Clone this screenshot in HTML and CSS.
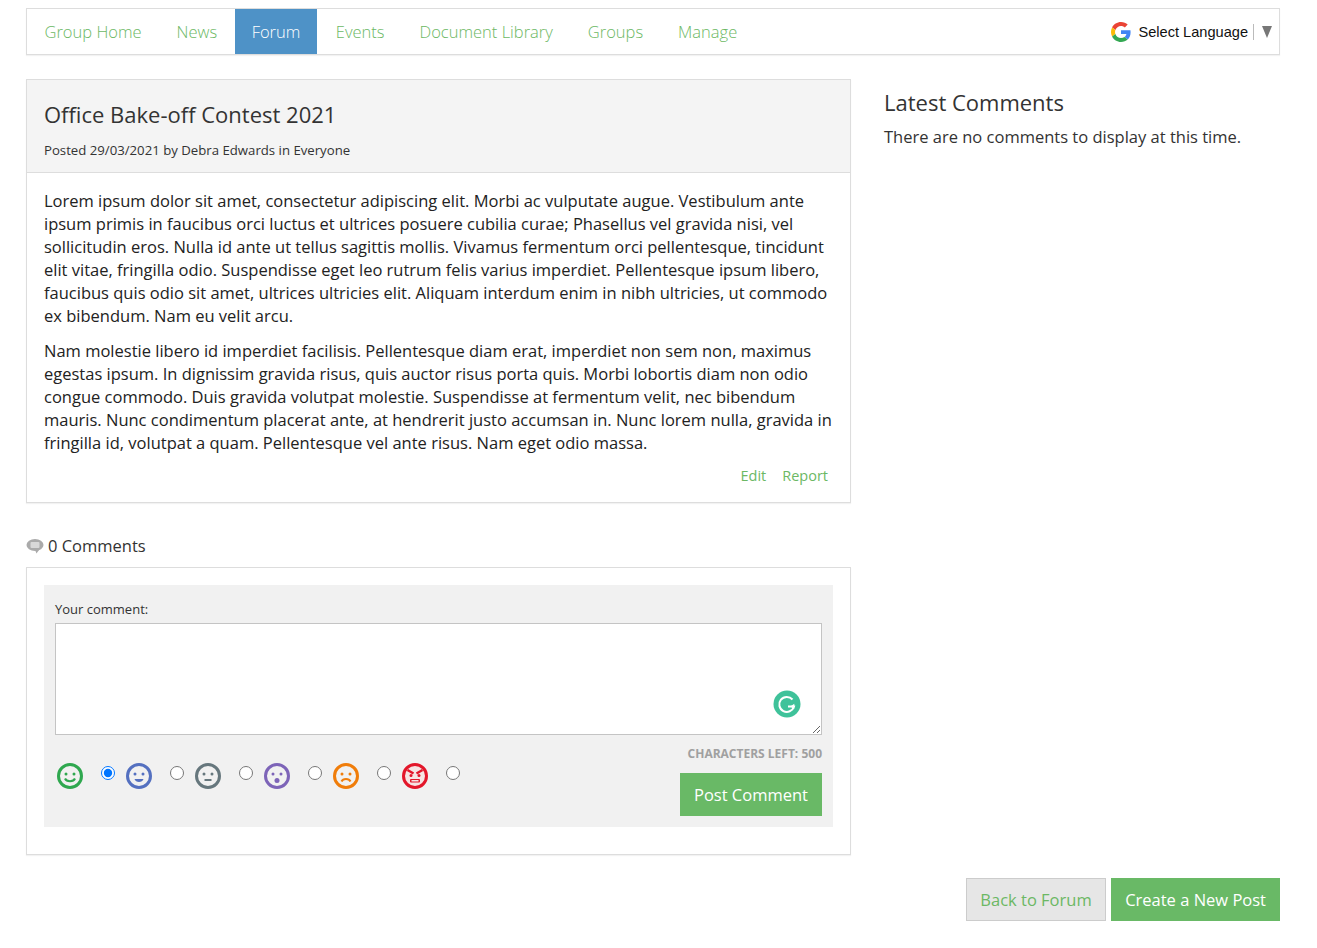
FILE: index.html
```html
<!DOCTYPE html>
<html lang="en">
<head>
  <meta charset="UTF-8">
  <title>Office Bake-off Contest 2021</title>
  <link rel="stylesheet" href="styles.css">
</head>
<body>

<div class="page">
  <nav class="topnav">
    <a href="#">Group Home</a>
    <a href="#">News</a>
    <a href="#" class="active">Forum</a>
    <a href="#">Events</a>
    <a href="#">Document Library</a>
    <a href="#">Groups</a>
    <a href="#">Manage</a>
    <div class="translate">
      <svg class="g-logo" width="20" height="20" viewBox="0 0 48 48">
        <path fill="#EA4335" d="M24 9.500c3.500 0 6.700 1.200 9.200 3.600l6.900-6.900C35.900 2.400 30.500 0 24 0 14.600 0 6.500 5.400 2.600 13.200l8 6.200C12.500 13.700 17.800 9.500 24 9.500z"/>
        <path fill="#4285F4" d="M47 24.500c0-1.600-.2-3.100-.4-4.500H24v9h12.900c-.6 3-2.200 5.500-4.700 7.200l7.700 6C44.400 38.100 47 31.900 47 24.500z"/>
        <path fill="#FBBC05" d="M10.500 28.600c-.5-1.400-.8-3-.8-4.600s.3-3.200.8-4.600l-8-6.200C.9 16.500 0 20.100 0 24s.9 7.500 2.600 10.800l7.900-6.200z"/>
        <path fill="#34A853" d="M24 48c6.500 0 11.900-2.100 15.900-5.800l-7.700-6c-2.100 1.400-4.900 2.300-8.200 2.300-6.200 0-11.500-4.200-13.400-9.900l-8 6.200C6.500 42.600 14.600 48 24 48z"/>
      </svg>
      <span class="lang-text">Select Language</span>
      <span class="lang-arrow"></span>
    </div>
  </nav>

  <div class="columns">
    <main class="main-col">
      <article class="post">
        <header class="post-head">
          <h1>Office Bake-off Contest 2021</h1>
          <p class="meta">Posted 29/03/2021 by Debra Edwards in Everyone</p>
        </header>
        <div class="post-body">
          <p>Lorem ipsum dolor sit amet, consectetur adipiscing elit. Morbi ac vulputate augue. Vestibulum ante ipsum primis in faucibus orci luctus et ultrices posuere cubilia curae; Phasellus vel gravida nisi, vel sollicitudin eros. Nulla id ante ut tellus sagittis mollis. Vivamus fermentum orci pellentesque, tincidunt elit vitae, fringilla odio. Suspendisse eget leo rutrum felis varius imperdiet. Pellentesque ipsum libero, faucibus quis odio sit amet, ultrices ultricies elit. Aliquam interdum enim in nibh ultricies, ut commodo ex bibendum. Nam eu velit arcu.</p>
          <p>Nam molestie libero id imperdiet facilisis. Pellentesque diam erat, imperdiet non sem non, maximus egestas ipsum. In dignissim gravida risus, quis auctor risus porta quis. Morbi lobortis diam non odio congue commodo. Duis gravida volutpat molestie. Suspendisse at fermentum velit, nec bibendum mauris. Nunc condimentum placerat ante, at hendrerit justo accumsan in. Nunc lorem nulla, gravida in fringilla id, volutpat a quam. Pellentesque vel ante risus. Nam eget odio massa.</p>
          <div class="post-links">
            <a href="#">Edit</a>
            <a href="#">Report</a>
          </div>
        </div>
      </article>

      <div class="comment-count">
        <svg width="18" height="16" viewBox="0 0 18 16">
          <ellipse cx="9" cy="7" rx="8.500" ry="6" fill="#aaa"/>
          <path d="M9 12l4 0-2.500 3.500z" fill="#aaa"/>
          <rect x="4.500" y="4" width="9" height="6" rx="1" fill="#d8d8d8"/>
        </svg>
        <span>0 Comments</span>
      </div>

      <section class="comment-card">
        <form class="comment-form">
          <label for="comment">Your comment:</label>
          <div class="textarea-wrap">
            <textarea id="comment"></textarea>
            <svg class="grammarly" width="28" height="28" viewBox="0 0 28 28">
              <circle cx="14" cy="14" r="13.500" fill="#3fc29a"/>
              <path d="M19.500 9.500a7.500 7.500 0 1 0 1.500 7h-6" fill="none" stroke="#fff" stroke-width="2"/>
              <path d="M21.300 13.800v5.200l-4-2.500z" fill="#fff"/>
            </svg>
          </div>
          <div class="form-foot">
            <div class="moods">
              <label class="mood">
                <svg width="26" height="26" viewBox="0 0 26 26" class="m-green">
                  <circle class="ring" cx="13" cy="13" r="11.500"/>
                  <circle class="eye" cx="9" cy="11" r="1.500"/><circle class="eye" cx="17" cy="11" r="1.500"/>
                  <path class="line" d="M8 15.500c1.500 3.500 8.500 3.500 10 0"/>
                </svg>
                <input type="radio" name="mood" checked>
              </label>
              <label class="mood">
                <svg width="26" height="26" viewBox="0 0 26 26" class="m-blue">
                  <circle class="ring" cx="13" cy="13" r="11.500"/>
                  <circle class="eye" cx="9" cy="11" r="1.500"/><circle class="eye" cx="17" cy="11" r="1.500"/>
                  <path class="eye" d="M8.500 16h9c-1 4-8 4-9 0z"/>
                </svg>
                <input type="radio" name="mood">
              </label>
              <label class="mood">
                <svg width="26" height="26" viewBox="0 0 26 26" class="m-grey">
                  <circle class="ring" cx="13" cy="13" r="11.500"/>
                  <circle class="eye" cx="9" cy="11" r="1.500"/><circle class="eye" cx="17" cy="11" r="1.500"/>
                  <path class="line" d="M9.500 17h7"/>
                </svg>
                <input type="radio" name="mood">
              </label>
              <label class="mood">
                <svg width="26" height="26" viewBox="0 0 26 26" class="m-purple">
                  <circle class="ring" cx="13" cy="13" r="11.500"/>
                  <circle class="eye" cx="9" cy="11" r="1.500"/><circle class="eye" cx="17" cy="11" r="1.500"/>
                  <ellipse class="eye" cx="13" cy="17.500" rx="2.500" ry="2.500"/>
                </svg>
                <input type="radio" name="mood">
              </label>
              <label class="mood">
                <svg width="26" height="26" viewBox="0 0 26 26" class="m-orange">
                  <circle class="ring" cx="13" cy="13" r="11.500"/>
                  <circle class="eye" cx="9" cy="11" r="1.500"/><circle class="eye" cx="17" cy="11" r="1.500"/>
                  <path class="line" d="M8.500 18.500c1.500-3.500 7.500-3.500 9 0"/>
                </svg>
                <input type="radio" name="mood">
              </label>
              <label class="mood">
                <svg width="26" height="26" viewBox="0 0 26 26" class="m-red">
                  <circle class="ring" cx="13" cy="13" r="11.500"/>
                  <path class="brow" d="M5.500 7l6 3.500M20.500 7l-6 3.500"/>
                  <circle class="eye" cx="9" cy="12.500" r="1.500"/><circle class="eye" cx="17" cy="12.500" r="1.500"/>
                  <rect class="eye" x="8" y="16" width="10" height="3.500" rx="1"/>
                  <rect class="teeth" x="9.500" y="17" width="7" height="1.500"/>
                </svg>
                <input type="radio" name="mood">
              </label>
            </div>
            <div class="submit-col">
              <div class="chars-left">CHARACTERS LEFT: 500</div>
              <button type="button" class="btn btn-green">Post Comment</button>
            </div>
          </div>
        </form>
      </section>
    </main>

    <aside class="side-col">
      <h2>Latest Comments</h2>
      <p>There are no comments to display at this time.</p>
    </aside>
  </div>

  <div class="page-actions">
    <a href="#" class="btn btn-grey">Back to Forum</a>
    <a href="#" class="btn btn-green">Create a New Post</a>
  </div>
</div>

</body>
</html>
```

FILE: styles.css
```css
* { box-sizing: border-box; }
body {
  margin: 0;
  background: #fff;
  color: #333;
  font-family: 'Open Sans', sans-serif;
  font-size: 16.500px;
  line-height: 23px;
}
a { color: #6cb864; text-decoration: none; }

.page { padding: 8px 37px 0 26px; }

/* top nav */
.topnav {
  display: flex;
  height: 47px;
  border: 1px solid #ddd;
  box-shadow: 0 1px 1px rgba(0, 0, 0, 0.05);
}
.topnav > a {
  padding: 0 17.500px;
  font-size: 16.500px;
  font-weight: 300;
  line-height: 46px;
  color: #6cb864;
}
.topnav > a.active {
  margin-right: 1px;
  padding: 0 17px;
  background: #4e92c7;
  color: #fff;
}
.translate {
  display: flex;
  align-items: center;
  margin-left: auto;
  padding-right: 6px;
  font-family: 'Liberation Sans', sans-serif;
  font-size: 14.600px;
  color: #111;
}
.g-logo { margin-right: 7px; }
.lang-text {
  padding-right: 5px;
  border-right: 1px solid #bbb;
  line-height: 16px;
}
.lang-arrow {
  width: 0;
  height: 0;
  margin-left: 8px;
  margin-right: 1px;
  border-left: 5.500px solid transparent;
  border-right: 5.500px solid transparent;
  border-top: 12px solid #777;
}

.columns {
  display: flex;
  gap: 33px;
  margin-top: 24px;
}
.main-col { width: 825px; flex: none; }
.side-col { flex: 1; padding-top: 8px; }
.side-col h2 {
  margin: 0 0 8px;
  font-size: 22px;
  font-weight: 400;
  line-height: 30px;
}
.side-col p { margin: 0; }

/* post */
.post {
  border: 1px solid #ddd;
  box-shadow: 0 1px 1px rgba(0, 0, 0, 0.05);
}
.post-head {
  height: 93px;
  padding: 18px 17px 0;
  background: #f4f4f4;
  border-bottom: 1px solid #ddd;
}
.post-head h1 {
  margin: 0 0 10px;
  font-size: 22px;
  font-weight: 400;
  line-height: 32px;
}
.meta { margin: 0; font-size: 13.200px; line-height: 20px; }
.post-body { padding: 16px 15px 15px 17px; color: #222; }
.post-body p { margin: 0 0 12px; }
.post-links {
  display: flex;
  justify-content: flex-end;
  gap: 16px;
  padding-right: 7px;
  margin-top: -1px;
  font-size: 14.500px;
  line-height: 22px;
}

.comment-count {
  display: flex;
  align-items: center;
  gap: 4px;
  margin-top: 31px;
  height: 23px;
}

.comment-card {
  margin-top: 10px;
  padding: 17px 17px 27px;
  border: 1px solid #ddd;
  box-shadow: 0 1px 1px rgba(0, 0, 0, 0.05);
}
.comment-form {
  height: 242px;
  padding: 14px 11px 0;
  background: #f1f1f1;
}
.comment-form > label {
  display: block;
  font-size: 13px;
  line-height: 20px;
  margin-bottom: 4px;
}
.textarea-wrap { position: relative; height: 112px; }
.textarea-wrap textarea {
  display: block;
  width: 100%;
  height: 112px;
  border: 1px solid #c4c4c4;
  background: #fff;
}
.grammarly { position: absolute; right: 21px; bottom: 17px; }

.form-foot {
  display: flex;
  justify-content: space-between;
}
.moods { display: flex; gap: 11px; padding: 28px 0 0 2px; }
.mood { display: flex; align-items: flex-start; gap: 18px; }
.mood input { margin: 3px 0 0; width: 14px; height: 14px; }
.mood .ring { fill: none; stroke-width: 3; }
.mood .line { fill: none; stroke-width: 2; }
.m-green .ring, .m-green .line { stroke: #2fa84f; }
.m-green .eye { fill: #2fa84f; }
.m-blue .ring { stroke: #5470c0; }
.m-blue .eye { fill: #5470c0; }
.m-grey .ring, .m-grey .line { stroke: #66777d; }
.m-grey .eye { fill: #66777d; }
.m-purple .ring { stroke: #7d64b8; }
.m-purple .eye { fill: #7d64b8; }
.m-orange .ring, .m-orange .line { stroke: #f07d0a; }
.m-orange .eye { fill: #f07d0a; }
.mood .m-red .ring { fill: #f6e4e4; stroke: #e3162a; }
.m-red .eye { fill: #e3162a; }
.m-red .brow { fill: none; stroke: #e3162a; stroke-width: 2.500; }
.m-red .teeth { fill: #f6e4e4; }

.submit-col {
  display: flex;
  flex-direction: column;
  align-items: flex-end;
}
.chars-left {
  margin-top: 8px;
  font-size: 12px;
  font-weight: 700;
  line-height: 22px;
  color: #a0a0a0;
}
.btn {
  display: block;
  height: 43px;
  padding: 0 14px;
  border: 0;
  font-family: inherit;
  font-size: 16.500px;
  line-height: 43px;
}
.btn-green { background: #69b966; color: #fff; }
.submit-col .btn { margin-top: 8px; }
.btn-grey {
  padding: 0 13.500px;
  background: #e6e6e6;
  border: 1px solid #ccc;
  line-height: 41px;
  color: #6cb864;
}

.page-actions {
  display: flex;
  justify-content: flex-end;
  gap: 5px;
  margin-top: 23px;
}
```
